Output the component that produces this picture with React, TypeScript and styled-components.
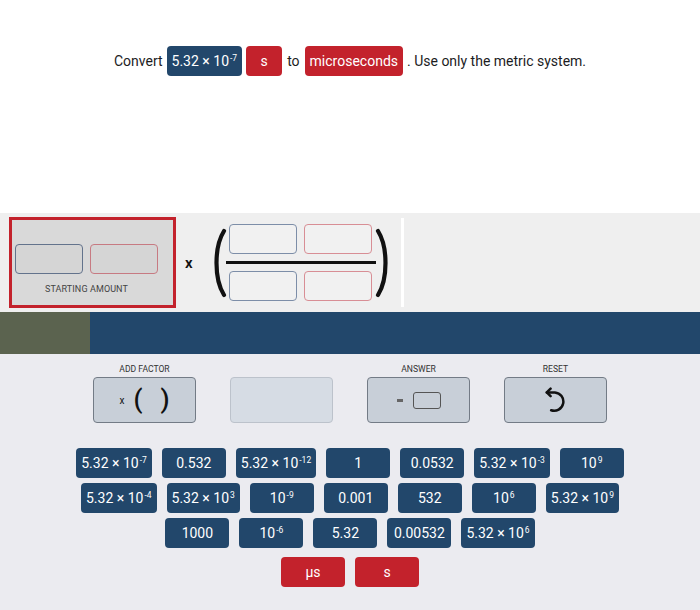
import React from "react";
import styled, { createGlobalStyle } from "styled-components";

const Global = createGlobalStyle`
  html, body { margin: 0; padding: 0; background: #ffffff; }
  body { font-family: Roboto, "Liberation Sans", Arial, sans-serif; color: #1c1c1e; }
  * { box-sizing: border-box; }
`;

const NAVY = "#22476b";
const RED = "#c3222c";

const Page = styled.div`
  width: 700px;
  height: 610px;
  display: flex;
  flex-direction: column;
  overflow: hidden;
`;

const Prompt = styled.div`
  height: 213px;
  padding-top: 46px;
  display: flex;
  justify-content: center;
  align-items: flex-start;
  background: #ffffff;
`;

const PromptLine = styled.div`
  display: flex;
  align-items: center;
  gap: 4px;
  height: 30px;
  font-size: 14px;
  color: #1c1c1e;
`;

const Word = styled.span<{ $pad?: number }>`
  padding: 0 ${(p) => p.$pad ?? 0}px;
`;

const Tag = styled.span<{ $tone: "navy" | "red"; $min?: number }>`
  display: inline-flex;
  align-items: center;
  justify-content: center;
  height: 30px;
  min-width: ${(p) => p.$min ?? 0}px;
  padding: 0 5px;
  border-radius: 4px;
  background: ${(p) => (p.$tone === "navy" ? NAVY : RED)};
  color: #ffffff;
  font-size: 14px;
  white-space: nowrap;
`;

const Text = styled.span`
  display: inline;
  white-space: nowrap;
`;

const Sup = styled.span`
  font-size: 8.5px;
  position: relative;
  top: -5px;
  margin-left: 1px;
`;

const Workspace = styled.div`
  height: 99px;
  background: #efefef;
  display: flex;
  align-items: center;
  padding-left: 9px;
`;

const StartBox = styled.div`
  width: 167px;
  height: 91px;
  border: 3px solid ${RED};
  background: #d9d9d9;
  padding: 24px 3px 0;
  display: flex;
  flex-direction: column;
  align-items: flex-start;
`;

const StartGroup = styled.div`
  display: flex;
  flex-direction: column;
  align-items: center;
`;

const SlotRow = styled.div`
  display: flex;
  gap: 7px;
`;

const Slot = styled.div<{ $tone: "blue" | "red"; $soft?: boolean }>`
  width: 68px;
  height: 30px;
  border-radius: 4px;
  border: 1.5px solid
    ${(p) =>
      p.$tone === "blue"
        ? p.$soft
          ? "#7d8ea8"
          : "#63738c"
        : p.$soft
        ? "#d88e95"
        : "#c77a82"};
  background: ${(p) => (p.$soft ? "#f1f1f1" : "#d5d5d5")};
`;

const StartLabel = styled.div`
  margin-top: 10px;
  font-size: 9px;
  letter-spacing: 0.1px;
  color: #444;
  text-transform: uppercase;
`;

const Times = styled.span`
  margin-left: 9px;
  font-size: 15px;
  font-weight: 600;
  color: #111;
`;

const Factor = styled.div`
  margin-left: 18px;
  display: flex;
  align-items: center;
`;

const Fraction = styled.div`
  display: flex;
  flex-direction: column;
  align-items: center;
  gap: 7px;
  margin: 0 -1px;
`;

const Bar = styled.div`
  width: 150px;
  height: 3px;
  background: #111;
`;

const Divider = styled.div`
  margin-left: 10px;
  width: 3px;
  height: 89px;
  background: #ffffff;
`;

const Progress = styled.div`
  height: 42px;
  display: flex;
`;

const ProgressDone = styled.div`
  width: 90px;
  background: #5b634f;
`;

const ProgressRest = styled.div`
  flex: 1;
  background: ${NAVY};
`;

const Tray = styled.div`
  flex: 1;
  background: #ebebf0;
  padding-top: 9px;
  display: flex;
  flex-direction: column;
  align-items: center;
`;

const Controls = styled.div`
  display: grid;
  grid-template-columns: repeat(4, 103px);
  column-gap: 34px;
`;

const Control = styled.div`
  display: flex;
  flex-direction: column;
  align-items: center;
  gap: 2px;
`;

const ControlLabel = styled.div`
  height: 12px;
  line-height: 12px;
  font-size: 8.6px;
  color: #333;
  text-transform: uppercase;
`;

const ToolButton = styled.div<{ $disabled?: boolean }>`
  width: 103px;
  height: 46px;
  border-radius: 4px;
  border: 1px solid ${(p) => (p.$disabled ? "#bcc2cb" : "#737b86")};
  background: ${(p) => (p.$disabled ? "#d6dce4" : "#c8cfd8")};
  display: flex;
  align-items: center;
  justify-content: center;
  color: #111;
`;

const SmallX = styled.span`
  font-size: 10px;
  margin-right: 3px;
  margin-top: 1px;
`;

const Paren = styled.span<{ $gap?: number }>`
  font-size: 26px;
  font-weight: 500;
  line-height: 1;
  margin-left: ${(p) => p.$gap ?? 0}px;
  margin-top: -2px;
`;

const Equals = styled.span`
  width: 6px;
  height: 3px;
  background: #666;
  margin-right: 10px;
`;

const AnswerBox = styled.span`
  width: 28px;
  height: 17px;
  border: 1.5px solid #555;
  border-radius: 3px;
`;

const Bank = styled.div`
  margin-top: 25px;
  display: flex;
  flex-direction: column;
  align-items: center;
  gap: 5px;
`;

const BankRow = styled.div`
  display: flex;
  justify-content: center;
  gap: 10px;
`;

const Chip = styled.div<{ $tone: "navy" | "red" }>`
  height: 30px;
  min-width: 64px;
  padding: 0 5px;
  border-radius: 4px;
  background: ${(p) => (p.$tone === "navy" ? NAVY : RED)};
  color: #ffffff;
  font-size: 14px;
  display: flex;
  align-items: center;
  justify-content: center;
  white-space: nowrap;
`;

const UnitRow = styled(BankRow)`
  margin-top: 9px;
`;

type Val = { base?: string; exp?: string };

const rows: Val[][] = [
  [
    { base: "5.32 × 10", exp: "-7" },
    { base: "0.532" },
    { base: "5.32 × 10", exp: "-12" },
    { base: "1" },
    { base: "0.0532" },
    { base: "5.32 × 10", exp: "-3" },
    { base: "10", exp: "9" },
  ],
  [
    { base: "5.32 × 10", exp: "-4" },
    { base: "5.32 × 10", exp: "3" },
    { base: "10", exp: "-9" },
    { base: "0.001" },
    { base: "532" },
    { base: "10", exp: "6" },
    { base: "5.32 × 10", exp: "9" },
  ],
  [
    { base: "1000" },
    { base: "10", exp: "-6" },
    { base: "5.32" },
    { base: "0.00532" },
    { base: "5.32 × 10", exp: "6" },
  ],
];

const Value = ({ v }: { v: Val }) => (
  <Text>
    {v.base}
    {v.exp && <Sup>{v.exp}</Sup>}
  </Text>
);

const BigParen = ({ flip }: { flip?: boolean }) => (
  <svg width="16" height="72" viewBox="0 0 16 72" style={flip ? { transform: "scaleX(-1)" } : undefined}>
    <path d="M13 4 C3 20 3 52 13 68" fill="none" stroke="#111" strokeWidth="4.2" strokeLinecap="round" />
  </svg>
);

const ResetIcon = () => (
  <svg width="26" height="26" viewBox="0 0 24 24" fill="none" stroke="#111" strokeWidth="2.3" strokeLinecap="round" strokeLinejoin="round">
    <path d="M3.5 5 H11 A8.5 8.5 0 1 1 7.5 21.5" />
    <path d="M7 1.5 L3.5 5 L7 8.5" />
  </svg>
);

export default function App() {
  return (
    <Page>
      <Global />
      <Prompt>
        <PromptLine>
          <Word>Convert</Word>
          <Tag $tone="navy">
            <Value v={{ base: "5.32 × 10", exp: "-7" }} />
          </Tag>
          <Tag $tone="red" $min={36}>
            s
          </Tag>
          <Word $pad={1}>to</Word>
          <Tag $tone="red">microseconds</Tag>
          <Word>. Use only the metric system.</Word>
        </PromptLine>
      </Prompt>

      <Workspace>
        <StartBox>
          <StartGroup>
            <SlotRow>
              <Slot $tone="blue" />
              <Slot $tone="red" />
            </SlotRow>
            <StartLabel>Starting Amount</StartLabel>
          </StartGroup>
        </StartBox>
        <Times>x</Times>
        <Factor>
          <BigParen />
          <Fraction>
            <SlotRow>
              <Slot $tone="blue" $soft />
              <Slot $tone="red" $soft />
            </SlotRow>
            <Bar />
            <SlotRow>
              <Slot $tone="blue" $soft />
              <Slot $tone="red" $soft />
            </SlotRow>
          </Fraction>
          <BigParen flip />
        </Factor>
        <Divider />
      </Workspace>

      <Progress>
        <ProgressDone />
        <ProgressRest />
      </Progress>

      <Tray>
        <Controls>
          <Control>
            <ControlLabel>Add Factor</ControlLabel>
            <ToolButton>
              <SmallX>x</SmallX>
              <Paren $gap={6}>(</Paren>
              <Paren $gap={18}>)</Paren>
            </ToolButton>
          </Control>
          <Control>
            <ControlLabel />
            <ToolButton $disabled />
          </Control>
          <Control>
            <ControlLabel>Answer</ControlLabel>
            <ToolButton>
              <Equals />
              <AnswerBox />
            </ToolButton>
          </Control>
          <Control>
            <ControlLabel>Reset</ControlLabel>
            <ToolButton>
              <ResetIcon />
            </ToolButton>
          </Control>
        </Controls>

        <Bank>
          {rows.map((row, i) => (
            <BankRow key={i}>
              {row.map((v, j) => (
                <Chip key={j} $tone="navy">
                  <Value v={v} />
                </Chip>
              ))}
            </BankRow>
          ))}
        </Bank>

        <UnitRow>
          <Chip $tone="red">µs</Chip>
          <Chip $tone="red">s</Chip>
        </UnitRow>
      </Tray>
    </Page>
  );
}
